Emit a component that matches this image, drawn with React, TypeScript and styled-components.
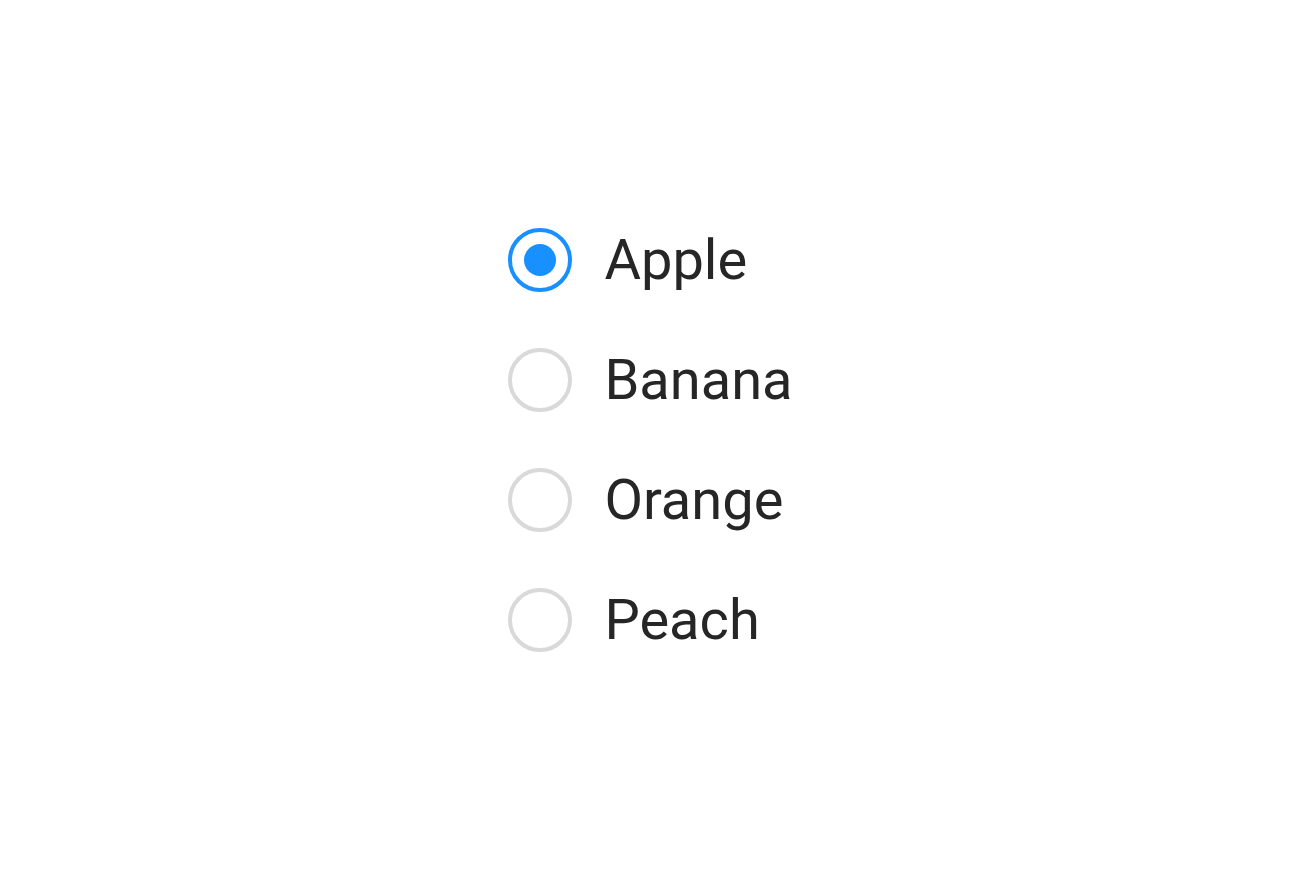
import React, {useState} from "react";
import styled, {createGlobalStyle} from "styled-components";

const GlobalStyle = createGlobalStyle`
  html, body {
    margin: 0;
    padding: 0;
    background: #fff;
  }
  body {
    font-family: Roboto, "Liberation Sans", sans-serif;
  }
`;

const fruits = ["Apple", "Banana", "Orange", "Peach"];

function App() {
  const [value, setValue] = useState("Apple");

  return (
    <>
      <GlobalStyle />
      <Page>
        <RadioGroup role="radiogroup">
          {fruits.map((fruit) => (
            <RadioRow key={fruit} onClick={() => setValue(fruit)}>
              <RadioCircle $checked={value === fruit} />
              <RadioLabel>{fruit}</RadioLabel>
            </RadioRow>
          ))}
        </RadioGroup>
      </Page>
    </>
  );
}

export default App;

const Page = styled.div`
  width: 100vw;
  height: 100vh;
  display: flex;
  align-items: center;
  justify-content: center;
`;

const RadioGroup = styled.div`
  display: flex;
  flex-direction: column;
  gap: 56px;
  margin-top: 4px;
  margin-left: 1px;
`;

const RadioRow = styled.label`
  height: 64px;
  display: flex;
  align-items: center;
  gap: 32px;
  cursor: pointer;
`;

const RadioCircle = styled.span<{ $checked: boolean }>`
  box-sizing: border-box;
  width: 64px;
  height: 64px;
  flex: none;
  border-radius: 50%;
  border: 4px solid ${(p) => (p.$checked ? "#1890ff" : "#d9d9d9")};
  display: flex;
  align-items: center;
  justify-content: center;
  &::after {
    content: "";
    width: 32px;
    height: 32px;
    border-radius: 50%;
    background: #1890ff;
    display: ${(p) => (p.$checked ? "block" : "none")};
  }
`;

const RadioLabel = styled.span`
  font-size: 56px;
  line-height: 64px;
  color: #262626;
`;
